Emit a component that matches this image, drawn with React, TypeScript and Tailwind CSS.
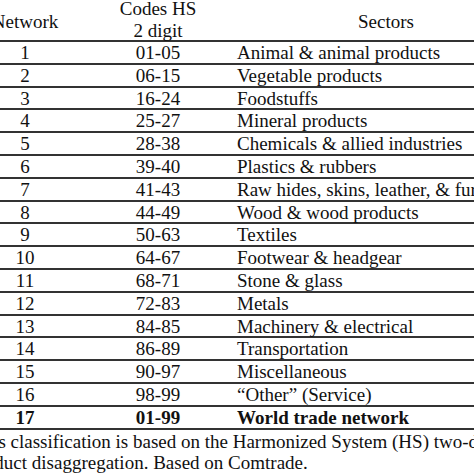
const rows: [string, string, string][] = [
  ["1", "01-05", "Animal & animal products"],
  ["2", "06-15", "Vegetable products"],
  ["3", "16-24", "Foodstuffs"],
  ["4", "25-27", "Mineral products"],
  ["5", "28-38", "Chemicals & allied industries"],
  ["6", "39-40", "Plastics & rubbers"],
  ["7", "41-43", "Raw hides, skins, leather, & furs"],
  ["8", "44-49", "Wood & wood products"],
  ["9", "50-63", "Textiles"],
  ["10", "64-67", "Footwear & headgear"],
  ["11", "68-71", "Stone & glass"],
  ["12", "72-83", "Metals"],
  ["13", "84-85", "Machinery & electrical"],
  ["14", "86-89", "Transportation"],
  ["15", "90-97", "Miscellaneous"],
  ["16", "98-99", "\u201cOther\u201d (Service)"],
];

export default function App() {
  return (
    <div className="w-[474px] h-[474px] overflow-hidden bg-white text-[#111] font-['Liberation_Serif',serif] text-[19px] leading-[21px]">
      <div className="w-[555px] -ml-[20px]">
        <div className="grid grid-cols-[90px_167px_1fr] h-[42px] border-b-2 border-[#333] items-center">
          <div className="text-center">Network</div>
          <div className="text-center pl-[9px] leading-[22px] -mt-[2px]">
            Codes HS
            <br />2 digit
          </div>
          <div className="text-center">Sectors</div>
        </div>
        {rows.map(([n, c, s]) => (
          <div
            key={n}
            className="grid grid-cols-[90px_167px_1fr] h-[22.8px] border-b-2 border-[#333] items-center"
          >
            <div className="text-center">{n}</div>
            <div className="text-center pl-[9px]">{c}</div>
            <div className="whitespace-nowrap">{s}</div>
          </div>
        ))}
        <div className="grid grid-cols-[90px_167px_1fr] h-[22.8px] border-b-2 border-[#333] items-center font-bold">
          <div className="text-center">17</div>
          <div className="text-center pl-[9px]">01-99</div>
          <div className="whitespace-nowrap">World trade network</div>
        </div>
      </div>
      <div className="-ml-[28px] mt-[1px] whitespace-nowrap">
        <div>This classification is based on the Harmonized System (HS) two-digit</div>
        <div className="-ml-[3px]">product disaggregation. Based on Comtrade.</div>
      </div>
    </div>
  );
}
